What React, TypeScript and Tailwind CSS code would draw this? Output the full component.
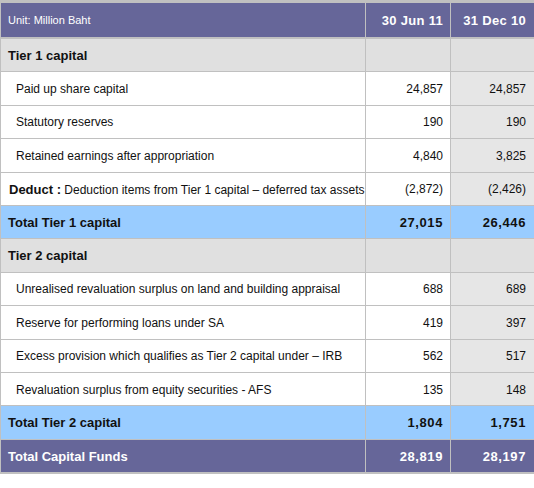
import React from 'react';

type Row = {
    label: React.ReactNode;
    a?: string;
    b?: string;
    kind: 'section' | 'item' | 'total' | 'grand';
};

const rows: Row[] = [
    { label: 'Tier 1 capital', kind: 'section' },
    { label: 'Paid up share capital', a: '24,857', b: '24,857', kind: 'item' },
    { label: 'Statutory reserves', a: '190', b: '190', kind: 'item' },
    { label: 'Retained earnings after appropriation', a: '4,840', b: '3,825', kind: 'item' },
    {
        label: (
            <span className="-ml-[7px]">
                <b className="text-[13px]">Deduct :</b> Deduction items from Tier 1 capital – deferred tax assets
            </span>
        ),
        a: '(2,872)',
        b: '(2,426)',
        kind: 'item',
    },
    { label: 'Total Tier 1 capital', a: '27,015', b: '26,446', kind: 'total' },
    { label: 'Tier 2 capital', kind: 'section' },
    { label: 'Unrealised revaluation surplus on land and building appraisal', a: '688', b: '689', kind: 'item' },
    { label: 'Reserve for performing loans under SA', a: '419', b: '397', kind: 'item' },
    { label: 'Excess provision which qualifies as Tier 2 capital under – IRB', a: '562', b: '517', kind: 'item' },
    { label: 'Revaluation surplus from equity securities - AFS', a: '135', b: '148', kind: 'item' },
    { label: 'Total Tier 2 capital', a: '1,804', b: '1,751', kind: 'total' },
    { label: 'Total Capital Funds', a: '28,819', b: '28,197', kind: 'grand' },
];

const cellBase = 'h-[32.4px] flex items-center pt-px';

export default function App() {
    return (
        <div
            className="w-[534px] bg-white text-[12px] text-[#111]"
            style={{ fontFamily: '"Liberation Sans", Arial, sans-serif' }}
        >
            <div className="bg-[#c0c0c0] pt-[3px] pl-px pb-[2px]">
                {/* Header */}
                <div className="grid grid-cols-[364px_84px_1fr] gap-x-px mb-[2px]">
                    <div className="h-[34px] flex items-center bg-[#666699] text-white text-[11px] pl-[7px] pt-px">
                        Unit: Million Baht
                    </div>
                    <div className="h-[34px] flex items-center justify-end bg-[#666699] text-white font-bold text-[13px] tracking-[0.3px] pr-[7px] pt-px">
                        30 Jun 11
                    </div>
                    <div className="h-[34px] flex items-center justify-end bg-[#666699] text-white font-bold text-[13px] tracking-[0.3px] pr-[8px] pt-px">
                        31 Dec 10
                    </div>
                </div>

                {/* Body */}
                <div className="grid grid-cols-[364px_84px_1fr] gap-px">
                    {rows.map((r, i) => {
                        let first = 'bg-white pl-[15px]';
                        let num = 'bg-white';
                        let third = 'bg-[#e6e6e6]';
                        if (r.kind === 'section') {
                            first = 'bg-[#e0e0e0] pl-[7px] font-bold text-[13px]';
                            num = 'bg-[#e0e0e0]';
                            third = 'bg-[#e0e0e0]';
                        } else if (r.kind === 'total') {
                            first = 'bg-[#99ccff] pl-[7px] font-bold text-[13px]';
                            num = 'bg-[#99ccff] font-bold text-[13px] tracking-[0.6px]';
                            third = num;
                        } else if (r.kind === 'grand') {
                            first = 'bg-[#666699] pl-[7px] font-bold text-[13px] text-white';
                            num = 'bg-[#666699] font-bold text-[13px] tracking-[0.6px] text-white';
                            third = num;
                        }
                        return (
                            <React.Fragment key={i}>
                                <div className={`${cellBase} ${first} whitespace-nowrap overflow-hidden`}>{r.label}</div>
                                <div className={`${cellBase} ${num} justify-end pr-[7px]`}>{r.a}</div>
                                <div className={`${cellBase} ${third} justify-end pr-[8px]`}>{r.b}</div>
                            </React.Fragment>
                        );
                    })}
                </div>
            </div>
        </div>
    );
}
